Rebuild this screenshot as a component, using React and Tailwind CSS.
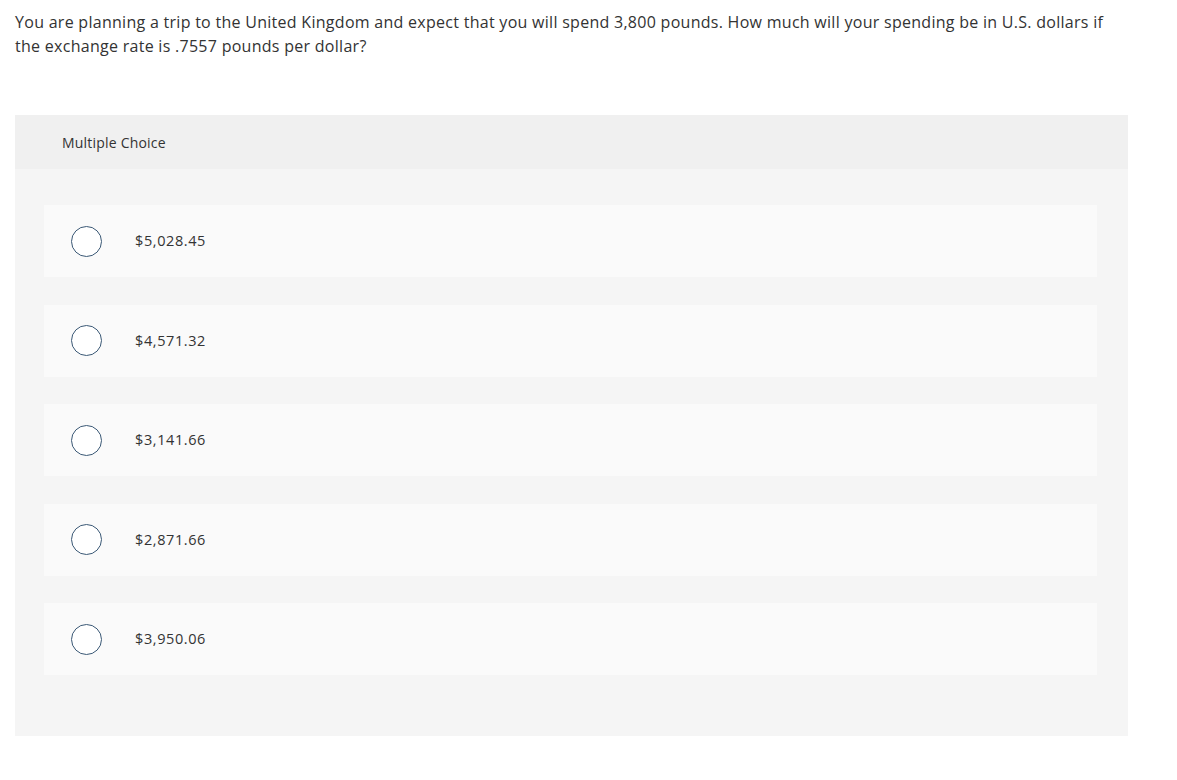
import React from 'react';

const CHOICES = ['$5,028.45', '$4,571.32', '$3,141.66', '$2,871.66', '$3,950.06'];

export default function App() {
  return (
    <div className="min-h-[780px] bg-white text-[#333] font-['Open_Sans','Liberation_Sans',sans-serif]">
      <p className="px-[15px] pt-[10px] text-[16px] leading-[24px] tracking-[0.28px] text-[#333]">
        You are planning a trip to the United Kingdom and expect that you will spend 3,800 pounds. How much will your spending be in U.S. dollars if
        <br />
        the exchange rate is .7557 pounds per dollar?
      </p>

      <div className="mx-[15px] mt-[57px] w-[1113px] bg-[#f5f5f5]">
        <div className="h-[54px] flex items-center pl-[47px] bg-[#f0f0f0] text-[14px] tracking-[0.2px] text-[#333]">Multiple Choice</div>
        <div className="pl-[29px] pr-[31px] pt-[36px] pb-[61px] flex flex-col gap-[27.5px]">
          {CHOICES.map((c) => (
            <label key={c} className="h-[72px] flex items-center bg-[#fafafa] pl-[27px] cursor-pointer">
              <span className="w-[31px] h-[31px] rounded-full border border-[#3a5875] bg-white shrink-0" />
              <span className="ml-[33px] text-[14.5px] tracking-[0.6px] text-[#333]">{c}</span>
            </label>
          ))}
        </div>
      </div>
    </div>
  );
}
